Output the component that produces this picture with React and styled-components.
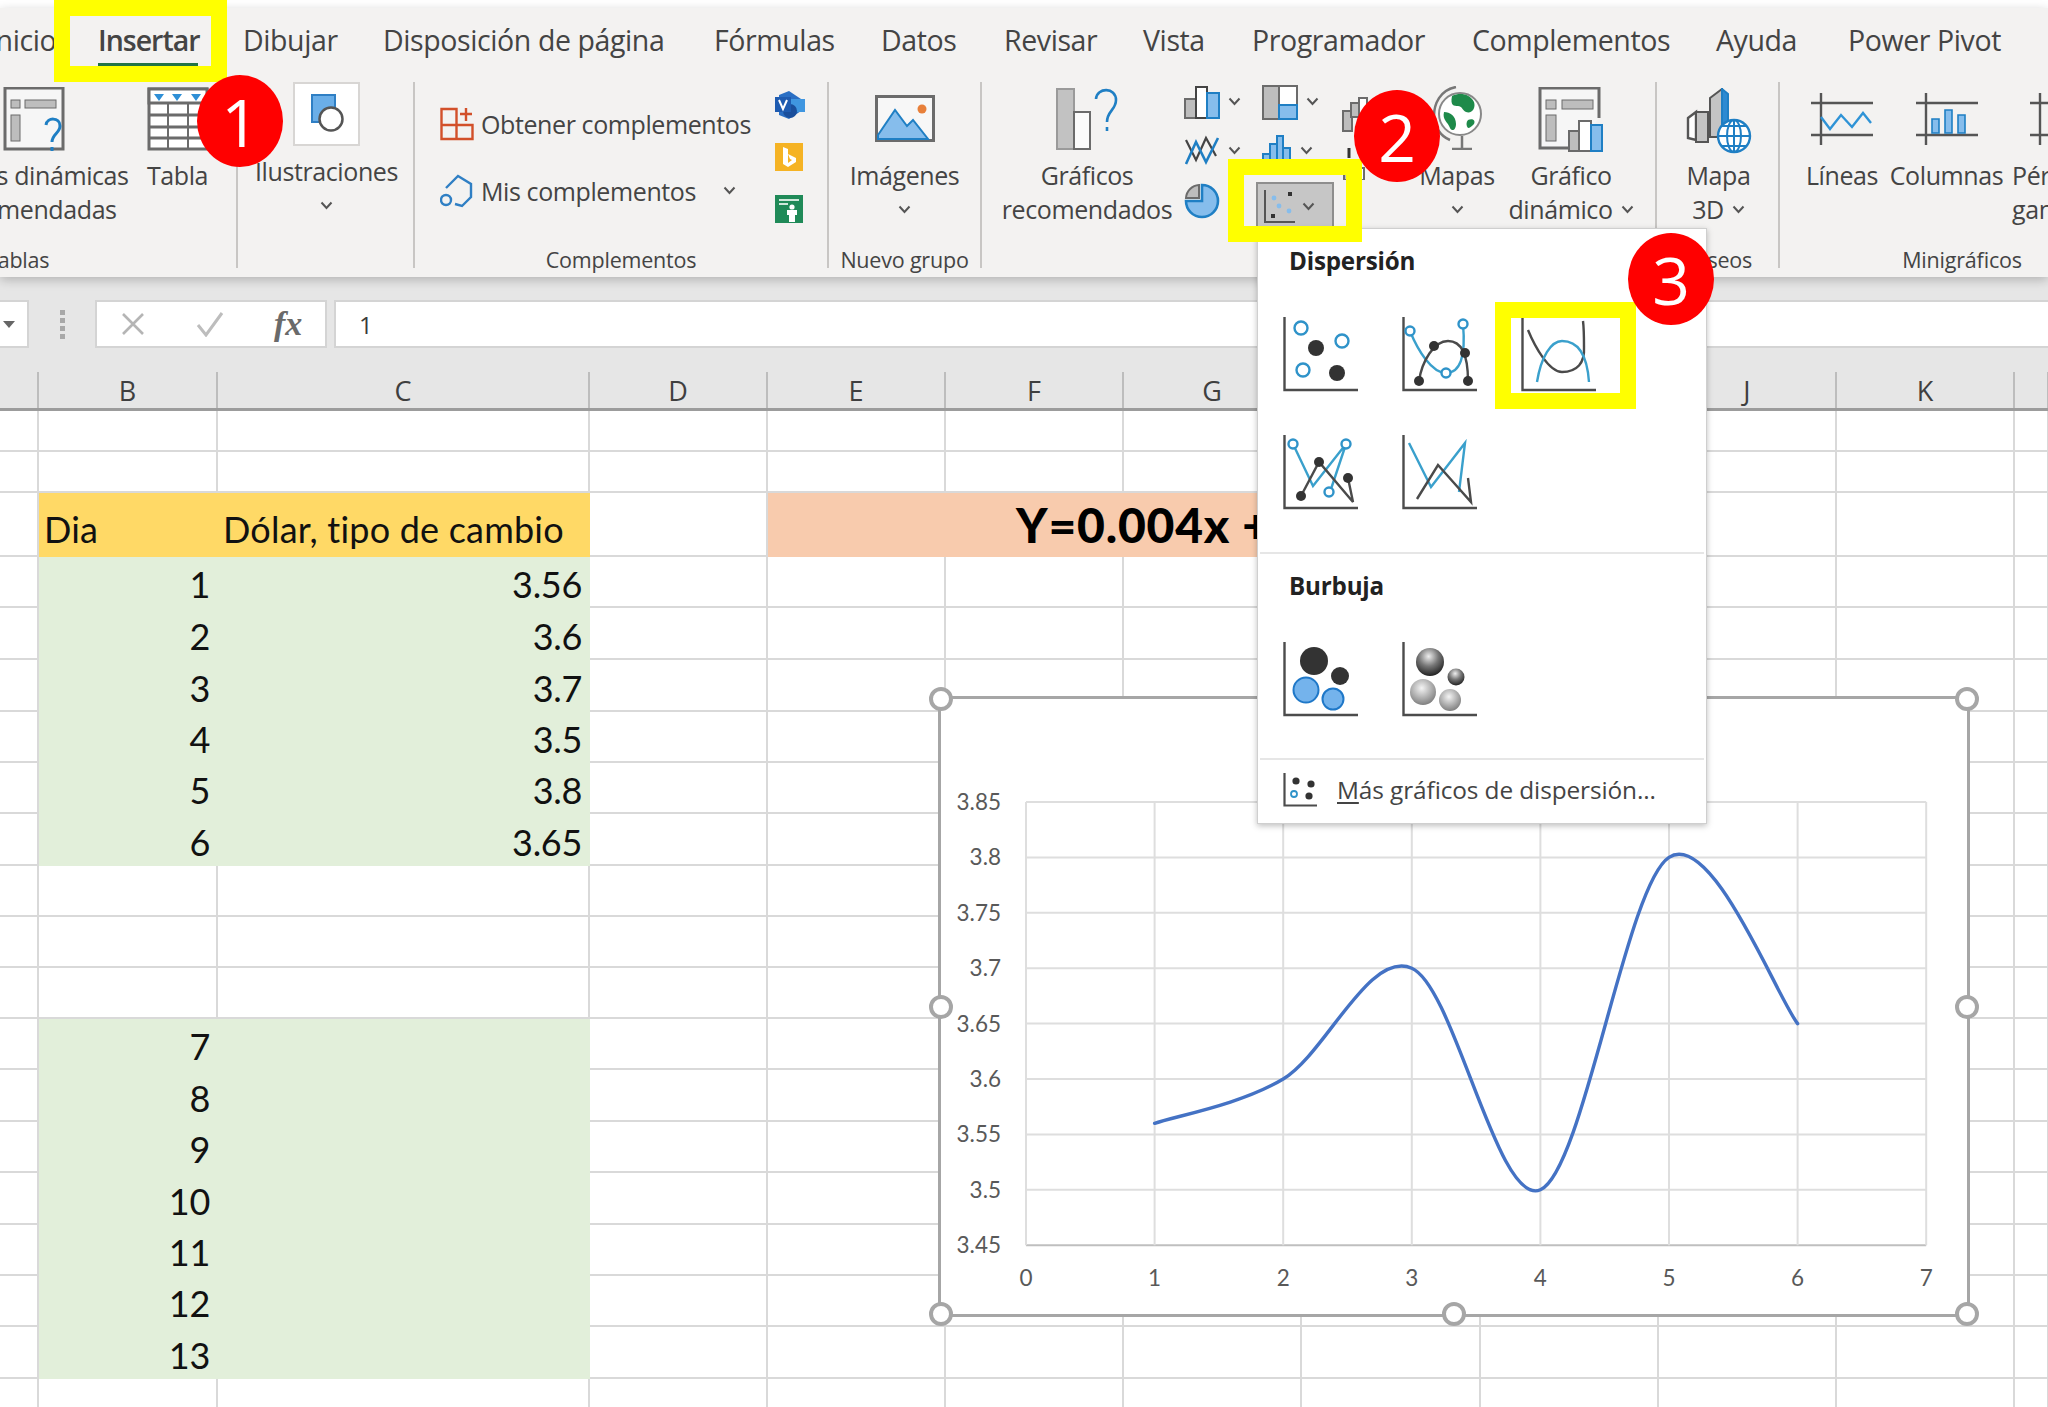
import React from 'react'
import styled, { createGlobalStyle } from 'styled-components'

const ui = '"Open Sans", "Noto Sans", sans-serif'
const cellFont = 'Lato, "Open Sans", sans-serif'
const ink = '#444444'
const gray = '#6b6b6b'
const blue = '#1f7fc4'
const grid = '#d9d9d9'

const Global = createGlobalStyle`
  html, body { margin: 0; padding: 0; background: #fff; }
  #root { width: 2048px; height: 1407px; overflow: hidden; }
`

const Page = styled.div`
  position: relative;
  width: 2048px;
  height: 1407px;
  overflow: hidden;
  background: #fff;
  padding-top: 8px;
  box-sizing: border-box;
  font-family: ${ui};
  color: ${ink};
`

/* ribbon */
const Ribbon = styled.header`
  position: relative;
  z-index: 2;
  height: 269px;
  background: #f3f2f1;
  box-shadow: 0 3px 10px rgba(0, 0, 0, 0.22);
  overflow: hidden;
`
const Tabs = styled.nav`
  display: flex;
  height: 74px;
  margin-left: -12px;
`
const Tab = styled.div`
  position: relative;
  flex: none;
  width: ${p => p.$w}px;
  height: 59px;
  font-size: 28.5px;
  letter-spacing: ${p => (p.$active ? -1 : -0.4)}px;
  line-height: 64px;
  white-space: nowrap;
  font-weight: ${p => (p.$active ? 600 : 400)};
  ${p => p.$active && `
    &::after {
      content: '';
      position: absolute;
      left: 0;
      width: 100px;
      top: 55px;
      height: 4px;
      background: #217346;
    }
  `}
`
const Groups = styled.div`
  display: flex;
  height: 186px;
`
const Group = styled.section`
  flex: none;
  display: flex;
  flex-direction: column;
  width: ${p => p.$w}px;
  border-right: ${p => (p.$last ? 'none' : '2px solid #c8c6c4')};
  box-sizing: border-box;
`
const GroupBody = styled.div`
  flex: 1;
  display: flex;
  min-height: 0;
`
const GroupLabel = styled.div`
  height: 30px;
  line-height: 44px;
  font-size: 21.5px;
  letter-spacing: -0.2px;
  white-space: nowrap;
  text-align: ${p => (p.$left === undefined ? 'center' : 'left')};
  margin-left: ${p => p.$left || 0}px;
`
const BigButton = styled.div`
  flex: none;
  display: flex;
  flex-direction: column;
  align-items: ${p => (p.$start ? 'flex-start' : 'center')};
  width: ${p => p.$w}px;
  margin-left: ${p => p.$ml || 0}px;
`
const Slot = styled.div`
  height: 76px;
  display: flex;
  justify-content: center;
  padding-left: ${p => p.$pad || 0}px;
`
const Line = styled.div`
  display: flex;
  align-items: center;
  justify-content: center;
  gap: 8px;
  height: 34px;
  font-size: 25px;
  letter-spacing: -0.4px;
  white-space: nowrap;
`
const IllusBox = styled.div`
  width: 67px;
  height: 64px;
  box-sizing: border-box;
  background: #fff;
  border: 2px solid #d8d6d4;
  display: flex;
  align-items: center;
  justify-content: center;
  margin-bottom: 8px;
`
const Addins = styled.div`
  flex: none;
  width: 335px;
  margin-left: 25px;
  padding-top: 25px;
  display: flex;
  flex-direction: column;
  gap: 34px;
`
const Addin = styled.div`
  display: flex;
  align-items: center;
  gap: 7px;
  height: 33px;
  font-size: 25px;
  letter-spacing: -0.4px;
  white-space: nowrap;
  & > span { margin-right: 20px; }
`
const SideIcons = styled.div`
  padding-top: 9px;
  display: flex;
  flex-direction: column;
  gap: 24px;
`
const MiniGrid = styled.div`
  flex: none;
  width: 236px;
  margin-left: 12px;
  padding-top: 3px;
  display: grid;
  grid-template-columns: 78px 80px 78px;
  grid-auto-rows: 49px;
`
const MiniCell = styled.div`
  display: flex;
  align-items: flex-start;
  gap: 8px;
  & > svg:last-child { margin-top: 12px; }
`
const ScatterBtn = styled.div`
  display: flex;
  align-items: center;
  box-sizing: border-box;
  width: 78px;
  height: 49px;
  margin-left: -6px;
  margin-top: -1px;
  gap: 6px;
  background: #c6c6c6;
  border: 2px solid #8e8e8e;
`

/* formula bar */
const FormulaBar = styled.div`
  display: flex;
  height: 93px;
  padding-top: 23px;
  box-sizing: border-box;
  background: #e6e6e6;
`
const NameBox = styled.div`
  width: 29px;
  height: 48px;
  box-sizing: border-box;
  background: #fff;
  border: 2px solid #d4d4d4;
  border-left: none;
  display: flex;
  align-items: center;
  justify-content: center;
  padding-right: 10px;
  &::after {
    content: '';
    border-left: 6px solid transparent;
    border-right: 6px solid transparent;
    border-top: 7px solid #666;
  }
`
const Grip = styled.div`
  width: 66px;
  height: 48px;
  display: flex;
  flex-direction: column;
  align-items: center;
  justify-content: center;
  gap: 3px;
  & i { width: 5px; height: 5px; background: #a8a8a8; }
`
const FormulaButtons = styled.div`
  width: 232px;
  height: 48px;
  box-sizing: border-box;
  background: #fff;
  border: 2px solid #d4d4d4;
  display: flex;
  align-items: center;
  gap: 50px;
  padding-left: 23px;
`
const Fx = styled.span`
  font: italic 700 34px "Liberation Serif", serif;
  color: #6a6a6a;
`
const FormulaInput = styled.div`
  flex: 1;
  height: 48px;
  margin-left: 7px;
  padding-left: 23px;
  box-sizing: border-box;
  background: #fff;
  border: 2px solid #d4d4d4;
  border-right: none;
  font-size: 24px;
  line-height: 46px;
  color: #3a3a3a;
`

/* sheet */
const colWidths = [39, 179, 372, 178, 178, 178, 178, 179, 178, 178, 178, 34]
const rowHeights = [41, 41, 64, 51, 52, 52, 51, 51, 52, 51, 51, 51, 51, 52, 51, 52, 51, 51, 52, 51]
const colTemplate = colWidths.map(w => `${w}px`).join(' ')

const HeaderRow = styled.div`
  display: grid;
  grid-template-columns: ${colTemplate};
  height: 41px;
  box-sizing: border-box;
  background: #e6e6e6;
  border-bottom: 3px solid #9c9c9c;
`
const HeaderCell = styled.div`
  border-right: 2px solid #bdbdbd;
  box-sizing: border-box;
  text-align: center;
  font-size: 27px;
  line-height: 38px;
  color: #3f3f3f;
  overflow: hidden;
  margin-top: 2px;
`
const Sheet = styled.div`
  display: grid;
  grid-template-columns: ${colTemplate};
  grid-template-rows: ${rowHeights.map(h => `${h}px`).join(' ')};
`
const Cell = styled.div`
  box-sizing: border-box;
  background: ${p => p.$bg || '#fff'};
  border-right: ${p => (p.$bg ? 'none' : `2px solid ${grid}`)};
  border-bottom: ${p => (p.$bg ? 'none' : `2px solid ${grid}`)};
  display: flex;
  align-items: flex-end;
  justify-content: ${p => (p.$right ? 'flex-end' : 'flex-start')};
  padding: 0 ${p => (p.$right ? 8 : 0)}px 0 ${p => (p.$right ? 0 : 8)}px;
  font: 400 36px/48px ${cellFont};
  letter-spacing: -0.3px;
  color: #111;
  white-space: nowrap;
`
const HeadCell = styled(Cell)`
  padding: 0 0 4px 5px;
  letter-spacing: 0.2px;
`
const Equation = styled(Cell)`
  grid-column: span 4;
  border: none;
  padding-left: 248px;
  align-items: center;
  font-size: 48px;
  font-weight: 900;
  letter-spacing: 0.8px;
  color: #000;
`

/* chart */
const ChartFrame = styled.div`
  position: absolute;
  z-index: 3;
  left: 938px;
  top: 696px;
  width: 1032px;
  height: 621px;
  background: #fff;
  box-sizing: border-box;
  border: 3px solid #a6a6a6;
`
const Handle = styled.span`
  position: absolute;
  left: ${p => p.$x}%;
  top: ${p => p.$y}%;
  width: 24px;
  height: 24px;
  margin: -12px;
  box-sizing: border-box;
  border-radius: 50%;
  background: #fff;
  border: 4px solid #a6a6a6;
`

/* dropdown */
const Popup = styled.aside`
  position: absolute;
  z-index: 4;
  left: 1257px;
  top: 228px;
  width: 450px;
  height: 596px;
  box-sizing: border-box;
  background: #fff;
  border: 1px solid #cfcfcf;
  box-shadow: 0 2px 6px rgba(0, 0, 0, 0.25);
  display: flex;
  flex-direction: column;
`
const PopupTitle = styled.div`
  padding: ${p => p.$top}px 0 0 31px;
  font-size: 24.2px;
  font-weight: 700;
  line-height: 30px;
  color: #222;
  letter-spacing: -0.2px;
`
const IconGrid = styled.div`
  display: grid;
  grid-template-columns: 119px 119px 75px;
  grid-auto-rows: 75px;
  row-gap: 43px;
  padding: ${p => p.$top}px 0 0 25px;
`
const Divider = styled.hr`
  margin: ${p => p.$top}px 2px 0;
  border: none;
  border-top: 2px solid #e6e6e6;
`
const MoreRow = styled.div`
  display: flex;
  align-items: center;
  gap: 20px;
  padding: 12px 0 0 25px;
  font-size: 24.4px;
  line-height: 36px;
  letter-spacing: -0.1px;
  color: #444;
  white-space: nowrap;
  & u { text-underline-offset: 3px; }
`

/* annotations */
const Frame = styled.div`
  position: absolute;
  z-index: 5;
  left: ${p => p.$x}px;
  top: ${p => p.$y}px;
  width: ${p => p.$w}px;
  height: ${p => p.$h}px;
  box-sizing: border-box;
  border: 16px solid #ffff00;
`
const Badge = styled.div`
  position: absolute;
  z-index: 6;
  left: ${p => p.$x - 43}px;
  top: ${p => p.$y - 46}px;
  width: 86px;
  height: 92px;
  border-radius: 50%;
  background: #ff0000;
  color: #fff;
  display: flex;
  align-items: center;
  justify-content: center;
  font: 400 66px "Open Sans", sans-serif;
`

const Chevron = () => (
  <svg width="13" height="9" viewBox="0 0 13 9"><path d="M1.5 1.5 6.5 7l5-5.5" fill="none" stroke="#555" strokeWidth="2" /></svg>
)

const PivotIcon = () => (
  <svg width="70" height="72" viewBox="0 0 70 72" style={{ marginTop: 5, marginLeft: 10 }}>
    <rect x="3" y="1" width="58" height="61" fill="#f6f6f6" stroke={gray} strokeWidth="3" />
    <rect x="9" y="13" width="9" height="8" fill="#bdbdbd" stroke={gray} />
    <rect x="23" y="13" width="31" height="8" fill="#bdbdbd" stroke={gray} />
    <rect x="9" y="28" width="9" height="26" fill="#bdbdbd" stroke={gray} />
    <path d="M44 38c1-8 14-8 14 1 0 7-8 8-8 16M50 60v4" fill="none" stroke={blue} strokeWidth="3" />
  </svg>
)
const TableIcon = () => (
  <svg width="62" height="64" viewBox="0 0 62 64" style={{ marginTop: 5 }}>
    <rect x="2" y="2" width="58" height="60" fill="#fff" stroke={gray} strokeWidth="3" />
    <rect x="2" y="2" width="58" height="14" fill="#fff" stroke={gray} strokeWidth="3" />
    <path d="M7 7h10l-5 7zM25 7h10l-5 7zM44 7h10l-5 7z" fill="#2f8fd6" />
    <path d="M2 28h58M2 40h58M2 51h58" stroke={gray} strokeWidth="3" />
    <path d="M21 16v46M41 16v46" stroke={gray} strokeWidth="2" />
  </svg>
)
const IllusIcon = () => (
  <svg width="40" height="42" viewBox="0 0 40 42">
    <rect x="5" y="2" width="23" height="27" fill="#6aaee8" stroke="#2f7fc4" strokeWidth="2" />
    <circle cx="24" cy="26" r="11.5" fill="#fff" stroke="#555" strokeWidth="2.5" />
  </svg>
)
const StoreIcon = () => (
  <svg width="34" height="34" viewBox="0 0 34 34">
    <path d="M1.5 2h15v30h-15zM1.5 18h31v14h-16" fill="none" stroke="#d2502a" strokeWidth="2.4" />
    <path d="M26 1v13M20 7h12" stroke="#d2502a" strokeWidth="2.4" />
  </svg>
)
const MyAddinIcon = () => (
  <svg width="34" height="34" viewBox="0 0 34 34" fill="none" stroke="#2f7fc4" strokeWidth="2.4">
    <circle cx="6" cy="26" r="5" />
    <path d="M6 14 18 2l13 8v13l-9 9-7-2" />
  </svg>
)
const VisioIcon = () => (
  <svg width="30" height="28" viewBox="0 0 30 28">
    <path d="M14 0 26 8v12l-12 8-10-4V4z" fill="#2a6fc4" />
    <rect x="15" y="8" width="15" height="13" fill="#3f96e0" />
    <circle cx="15" cy="20" r="7" fill="#1a4f9c" />
    <rect x="0" y="6" width="16" height="15" fill="#1e5bb0" />
    <path d="m4 9 4 9 4-9" fill="none" stroke="#fff" strokeWidth="2" />
  </svg>
)
const BingIcon = () => (
  <svg width="28" height="28" viewBox="0 0 28 28">
    <rect width="28" height="28" fill="#f5b324" />
    <path d="M8 4v17l5 3 8-5v-4l-8-4 2 5 2 1-4 3V6z" fill="#fff" />
  </svg>
)
const PeopleIcon = () => (
  <svg width="28" height="28" viewBox="0 0 28 28">
    <rect width="28" height="28" fill="#1f8a58" />
    <path d="M4 5h20M4 9h9" stroke="#cfe8da" strokeWidth="2" />
    <circle cx="17" cy="12" r="2.6" fill="#fff" />
    <path d="M12 15h10v5h-2v7h-6v-7h-2z" fill="#fff" />
  </svg>
)
const PictureIcon = () => (
  <svg width="60" height="47" viewBox="0 0 60 47" style={{ marginTop: 13 }}>
    <rect x="1.5" y="1.5" width="57" height="44" fill="#f7f7f7" stroke={gray} strokeWidth="3" />
    <path d="M3 40 20 15l12 16 6-6 15 19H3z" fill="#86bdec" stroke={blue} strokeWidth="2" />
    <circle cx="47" cy="14" r="4.5" fill="#e8803a" />
  </svg>
)
const RecommendIcon = () => (
  <svg width="62" height="64" viewBox="0 0 62 64" style={{ marginTop: 5 }}>
    <rect x="1" y="2" width="17" height="60" fill="#c2c2c2" stroke="#9a9a9a" strokeWidth="2" />
    <rect x="18" y="25" width="16" height="37" fill="#fbfbfb" stroke={gray} strokeWidth="2" />
    <path d="M40 12c1-12 20-12 20 1 0 10-9 11-9 22M51 40v4" fill="none" stroke={blue} strokeWidth="2.6" />
  </svg>
)
const ColumnMini = () => (
  <svg width="36" height="35" viewBox="0 0 36 35">
    <rect x="1" y="14" width="12" height="19" fill="#bdbdbd" stroke={gray} strokeWidth="2" />
    <rect x="12" y="2" width="11" height="31" fill="#fff" stroke="#444" strokeWidth="2" />
    <rect x="23" y="8" width="12" height="25" fill="#86bdec" stroke={blue} strokeWidth="2" />
  </svg>
)
const TreeMini = () => (
  <svg width="36" height="35" viewBox="0 0 36 35">
    <rect x="1" y="1" width="16" height="33" fill="#bdbdbd" stroke={gray} strokeWidth="2" />
    <rect x="17" y="1" width="18" height="19" fill="#fff" stroke={gray} strokeWidth="2" />
    <rect x="17" y="20" width="18" height="14" fill="#86bdec" stroke={blue} strokeWidth="2" />
  </svg>
)
const WaterfallMini = () => (
  <svg width="26" height="35" viewBox="0 0 26 35">
    <rect x="1" y="14" width="9" height="20" fill="#bdbdbd" stroke={gray} strokeWidth="2" />
    <rect x="9" y="6" width="8" height="14" fill="#bdbdbd" stroke={gray} strokeWidth="2" />
    <rect x="17" y="1" width="8" height="20" fill="#fff" stroke={gray} strokeWidth="2" />
  </svg>
)
const LineMini = () => (
  <svg width="36" height="34" viewBox="0 0 36 34">
    <path d="M2 6 12 26 22 4l10 18" fill="none" stroke="#444" strokeWidth="2.2" />
    <path d="M2 30 12 8l10 20L34 4" fill="none" stroke={blue} strokeWidth="2.6" />
  </svg>
)
const HistMini = () => (
  <svg width="30" height="34" viewBox="0 0 30 34">
    <rect x="1" y="20" width="7" height="14" fill="#86bdec" stroke={blue} strokeWidth="2" />
    <rect x="8" y="10" width="7" height="24" fill="#86bdec" stroke={blue} strokeWidth="2" />
    <rect x="15" y="2" width="6" height="32" fill="#86bdec" stroke={blue} strokeWidth="2" />
    <rect x="21" y="14" width="7" height="20" fill="#86bdec" stroke={blue} strokeWidth="2" />
  </svg>
)
const StockMini = () => (
  <svg width="26" height="34" viewBox="0 0 26 34">
    <rect x="2" y="14" width="10" height="20" fill="#bdbdbd" stroke={gray} strokeWidth="2" />
    <rect x="12" y="22" width="10" height="12" fill="#fff" stroke={gray} strokeWidth="2" />
    <path d="M7 2v10" stroke="#333" strokeWidth="3" />
  </svg>
)
const PieMini = () => (
  <svg width="36" height="36" viewBox="0 0 36 36">
    <path d="M18 18V2a16 16 0 1 1-16 16z" fill="#86bdec" stroke={blue} strokeWidth="2.6" />
    <path d="M15 15V2A14 14 0 0 0 2 15z" fill="#bdbdbd" stroke={gray} strokeWidth="2" />
  </svg>
)
const ScatterMini = () => (
  <svg width="38" height="42" viewBox="0 0 38 42">
    <path d="M7 4v32h30" fill="none" stroke="#555" strokeWidth="2" />
    <rect x="30" y="6" width="4" height="4" fill="#333" />
    <rect x="13" y="28" width="4" height="4" fill="#333" />
    <circle cx="16" cy="12" r="2.4" fill="#86bdec" />
    <circle cx="21" cy="20" r="2.4" fill="#86bdec" />
    <circle cx="31" cy="25" r="2.4" fill="#86bdec" />
  </svg>
)
const GlobeIcon = () => (
  <svg width="50" height="64" viewBox="0 0 50 64" style={{ marginTop: 4 }}>
    <path d="M24 1C8 4 2 18 2 30c0 10 6 20 16 24" fill="none" stroke="#777" strokeWidth="2.5" />
    <circle cx="28" cy="28" r="21" fill="#fff" stroke="#888" strokeWidth="2" />
    <path d="M20 10c8-4 18-2 22 6 2 6-2 12-8 10-4-2-4-6-8-6s-8 0-6-10zM12 26c6 0 12 4 12 12 0 6-4 8-6 4-2-6-8-8-6-16zM36 34c4-2 8 0 6 4-2 2-4 4-6 4-2-2-2-6 0-8z" fill="#1e8a4a" />
    <path d="M20 63h20M30 50v13" stroke="#777" strokeWidth="2.5" />
  </svg>
)
const PivotChartIcon = () => (
  <svg width="66" height="66" viewBox="0 0 66 66" style={{ marginTop: 5 }}>
    <path d="M40 61H2V1h59v30" fill="#f6f6f6" stroke={gray} strokeWidth="3" />
    <rect x="8" y="13" width="10" height="9" fill="#bdbdbd" stroke={gray} />
    <rect x="24" y="13" width="31" height="9" fill="#bdbdbd" stroke={gray} />
    <rect x="8" y="28" width="10" height="26" fill="#bdbdbd" stroke={gray} />
    <rect x="31" y="44" width="10" height="20" fill="#bdbdbd" stroke={gray} strokeWidth="2" />
    <rect x="41" y="34" width="12" height="30" fill="#fff" stroke={gray} strokeWidth="2" />
    <rect x="53" y="38" width="11" height="26" fill="#86bdec" stroke={blue} strokeWidth="2" />
  </svg>
)
const Map3dIcon = () => (
  <svg width="66" height="66" viewBox="0 0 66 66" style={{ marginTop: 6 }}>
    <path d="M2 30 10 24v28l-8-2z" fill="#fff" stroke="#555" strokeWidth="2.4" />
    <path d="M10 24h12v30H10z" fill="#c4c4c4" stroke="#555" strokeWidth="2" />
    <path d="M24 10 36 1v48H24z" fill="#c4c4c4" stroke="#555" strokeWidth="2" />
    <path d="M36 1l6 5v30H36z" fill="#2d8ad2" stroke={blue} strokeWidth="2" />
    <circle cx="48" cy="48" r="16" fill="#fff" stroke={blue} strokeWidth="2.4" />
    <path d="M32 48h32M48 32v32M36 38h24M36 58h24" stroke={blue} strokeWidth="2" fill="none" />
    <ellipse cx="48" cy="48" rx="7" ry="16" fill="none" stroke={blue} strokeWidth="2" />
  </svg>
)
const SparkLine = () => (
  <svg width="62" height="52" viewBox="0 0 62 52" style={{ marginTop: 11 }}>
    <path d="M0 10h62M0 42h62M10 0v52" stroke="#555" strokeWidth="2.4" />
    <path d="M10 24l9 12 11-14 11 12 11-14 8 10" fill="none" stroke="#2f93d6" strokeWidth="2.4" />
  </svg>
)
const SparkColumn = () => (
  <svg width="62" height="52" viewBox="0 0 62 52" style={{ marginTop: 11 }}>
    <path d="M0 10h62M0 42h62M10 0v52" stroke="#555" strokeWidth="2.4" />
    <path d="M16 26h7v14h-7zM29 17h7v23h-7zM42 22h7v18h-7z" fill="#86bdec" stroke={blue} strokeWidth="1.6" />
  </svg>
)
const SparkWinLoss = () => (
  <svg width="62" height="52" viewBox="0 0 62 52" style={{ marginTop: 11 }}>
    <path d="M0 10h62M0 42h62M10 0v52" stroke="#555" strokeWidth="2.4" />
  </svg>
)

const Axes = ({ size = 75 }) => (
  <path d={`M1.5 0v${size - 2}H${size}`} fill="none" stroke="#4c4c4c" strokeWidth="2.4" />
)
const Plot = ({ children, size = 75 }) => (
  <svg width={size} height={size} viewBox={`0 0 ${size} ${size}`}>
    <Axes size={size} />
    {children}
  </svg>
)
const Open = ({ x, y, r = 6 }) => <circle cx={x} cy={y} r={r} fill="#fff" stroke="#2f93c9" strokeWidth="2.4" />
const Dot = ({ x, y, r = 7 }) => <circle cx={x} cy={y} r={r} fill="#333" />
const BlueLine = ({ d }) => <path d={d} fill="none" stroke="#3aa0cc" strokeWidth="2.4" />
const DarkLine = ({ d }) => <path d={d} fill="none" stroke="#4a4a4a" strokeWidth="2.4" />

const ScatterDots = () => (
  <Plot>
    <Open x={18} y={11} r={6.5} />
    <Open x={59} y={24} r={6.5} />
    <Open x={20} y={53} r={6.5} />
    <Dot x={33} y={31} r={8} />
    <Dot x={54} y={56} r={8} />
  </Plot>
)
const ScatterSmoothDots = () => (
  <Plot>
    <BlueLine d="M8 14C16 34 30 56 44 56S64 40 61 7" />
    <DarkLine d="M17 64C20 44 32 24 46 24S66 40 66 64" />
    <Open x={8} y={14} r={4.5} />
    <Open x={61} y={7} r={4.5} />
    <Open x={44} y={56} r={4.5} />
    <Dot x={32} y={29} r={5} />
    <Dot x={63} y={36} r={5} />
    <Dot x={17} y={64} r={5} />
    <Dot x={66} y={64} r={5} />
  </Plot>
)
const ScatterSmooth = () => (
  <Plot>
    <DarkLine d="M7 13C14 30 28 55 41 55C56 55 64 46 63 30C63 20 63 12 62 4" />
    <BlueLine d="M16 65C20 40 30 24 41 24C56 24 66 36 68 65" />
  </Plot>
)
const ScatterStraightDots = () => (
  <Plot>
    <BlueLine d="M10 9 30 51 63 9 47 57" />
    <DarkLine d="M18 61 36 27 70 67 65 43" />
    <Open x={10} y={9} r={4.5} />
    <Open x={63} y={9} r={4.5} />
    <Open x={46} y={57} r={4.5} />
    <Dot x={18} y={61} r={5} />
    <Dot x={36} y={27} r={5} />
    <Dot x={65} y={43} r={5} />
  </Plot>
)
const ScatterStraight = () => (
  <Plot>
    <BlueLine d="M7 8 29 52 63 8 57 57" />
    <DarkLine d="M15 64 36 30 69 67 66 43" />
  </Plot>
)
const Bubbles = () => (
  <Plot>
    <circle cx="31" cy="19" r="14" fill="#333" />
    <circle cx="57" cy="34" r="9" fill="#333" />
    <circle cx="23" cy="48" r="12.5" fill="#74b3ec" stroke="#1f78c8" strokeWidth="2" />
    <circle cx="50" cy="57" r="10.5" fill="#74b3ec" stroke="#1f78c8" strokeWidth="2" />
  </Plot>
)
const Bubbles3d = () => (
  <Plot>
    <defs>
      <radialGradient id="sphereDark" cx="45%" cy="30%" r="70%">
        <stop offset="0" stopColor="#eee" />
        <stop offset="0.5" stopColor="#777" />
        <stop offset="1" stopColor="#222" />
      </radialGradient>
      <radialGradient id="sphereLight" cx="45%" cy="35%" r="70%">
        <stop offset="0" stopColor="#f4f4f4" />
        <stop offset="1" stopColor="#777" />
      </radialGradient>
    </defs>
    <circle cx="28" cy="20" r="14" fill="url(#sphereDark)" />
    <circle cx="54" cy="35" r="8.5" fill="url(#sphereDark)" />
    <circle cx="21" cy="50" r="13" fill="url(#sphereLight)" />
    <circle cx="48" cy="58" r="11" fill="url(#sphereLight)" />
  </Plot>
)
const MoreIcon = () => (
  <svg width="34" height="34" viewBox="0 0 34 34">
    <path d="M1.5 0v32.5H34" fill="none" stroke="#4c4c4c" strokeWidth="2.2" />
    <circle cx="13" cy="8" r="3.6" fill="#333" />
    <circle cx="28" cy="11" r="3.6" fill="#333" />
    <circle cx="11" cy="21" r="3" fill="#fff" stroke="#2f93c9" strokeWidth="1.8" />
    <circle cx="26" cy="23" r="3.6" fill="#333" />
  </svg>
)

const CloseMark = () => (
  <svg width="26" height="26" viewBox="0 0 26 26"><path d="M3 3l20 20M23 3 3 23" stroke="#b5b5b5" strokeWidth="2.6" /></svg>
)
const CheckMark = () => (
  <svg width="28" height="26" viewBox="0 0 28 26"><path d="M2 14l8 10L26 2" fill="none" stroke="#bdbdbd" strokeWidth="3" /></svg>
)

/* chart data, in the frame's own pixels */
const points = [[1, 3.56], [2, 3.6], [3, 3.7], [4, 3.5], [5, 3.8], [6, 3.65]]
const px = x => 85 + x * 128.6
const py = y => 103 + (3.85 - y) * 1108
const smoothPath = pts => {
  const p = pts.map(([x, y]) => [px(x), py(y)])
  let d = `M${p[0][0]} ${p[0][1]}`
  for (let i = 0; i < p.length - 1; i++) {
    const a = p[i - 1] || p[i]
    const b = p[i]
    const c = p[i + 1]
    const e = p[i + 2] || c
    d += `C${b[0] + (c[0] - a[0]) / 6} ${b[1] + (c[1] - a[1]) / 6} ${c[0] - (e[0] - b[0]) / 6} ${c[1] - (e[1] - b[1]) / 6} ${c[0]} ${c[1]}`
  }
  return d
}

const Chart = () => {
  const ys = ['3.85', '3.8', '3.75', '3.7', '3.65', '3.6', '3.55', '3.5', '3.45']
  const xs = [0, 1, 2, 3, 4, 5, 6, 7]
  const label = { fontFamily: cellFont, fontSize: 22.5, fill: '#595959' }
  return (
    <svg width="1026" height="615" viewBox="0 0 1026 615" style={{ display: 'block' }}>
      {ys.map(v => (
        <g key={v}>
          <line x1={px(0)} x2={px(7)} y1={py(+v)} y2={py(+v)} stroke={v === '3.45' ? '#bfbfbf' : '#dedede'} strokeWidth="2" />
          <text x="60" y={py(+v) + 8} textAnchor="end" {...label}>{v}</text>
        </g>
      ))}
      {xs.map(v => (
        <g key={v}>
          <line x1={px(v)} x2={px(v)} y1={py(3.85)} y2={py(3.45)} stroke="#dedede" strokeWidth="2" />
          <text x={px(v)} y="587" textAnchor="middle" {...label}>{v}</text>
        </g>
      ))}
      <path d={smoothPath(points)} fill="none" stroke="#4472c4" strokeWidth="3.4" strokeLinecap="round" />
    </svg>
  )
}

const tabs = [
  ['Inicio', 110], ['Insertar', 145, true], ['Dibujar', 140], ['Disposición de página', 331], ['Fórmulas', 167],
  ['Datos', 123], ['Revisar', 139], ['Vista', 109], ['Programador', 220], ['Complementos', 244], ['Ayuda', 132], ['Power Pivot', 160]
]

const columns = ['', 'B', 'C', 'D', 'E', 'F', 'G', 'H', 'I', 'J', 'K', '']
const firstBlock = ['3.56', '3.6', '3.7', '3.5', '3.8', '3.65']

const renderSheet = () => {
  const cells = []
  rowHeights.forEach((_, r) => {
    colWidths.forEach((__, c) => {
      const key = `${r}-${c}`
      if (r === 2 && c === 4) {
        cells.push(<Equation key={key} $bg="#f8cbad">Y=0.004x +</Equation>)
        return
      }
      if (r === 2 && c > 4 && c < 8) return
      if (r === 2 && (c === 1 || c === 2)) {
        cells.push(<HeadCell key={key} $bg="#ffd966">{c === 1 ? 'Dia' : 'Dólar, tipo de cambio'}</HeadCell>)
        return
      }
      const first = r >= 3 && r <= 8
      const second = r >= 12 && r <= 18
      if ((first || second) && (c === 1 || c === 2)) {
        let text = ''
        if (c === 1) text = first ? r - 2 : r - 5
        if (c === 2 && first) text = firstBlock[r - 3]
        cells.push(<Cell key={key} $bg="#e2efda" $right>{text}</Cell>)
        return
      }
      cells.push(<Cell key={key} />)
    })
  })
  return cells
}

const App = () => (
  <Page>
    <Global />
    <Ribbon>
      <Tabs>
        {tabs.map(([name, w, active]) => <Tab key={name} $w={w} $active={active}>{name}</Tab>)}
      </Tabs>
      <Groups>
        <Group $w={238}>
          <GroupBody>
            <BigButton $w={192} $ml={-64}>
              <Slot><PivotIcon /></Slot>
              <Line>Tablas dinámicas</Line>
              <Line>recomendadas</Line>
            </BigButton>
            <BigButton $w={57} $ml={21}>
              <Slot><TableIcon /></Slot>
              <Line>Tabla</Line>
            </BigButton>
          </GroupBody>
          <GroupLabel $left={-14}>Tablas</GroupLabel>
        </Group>
        <Group $w={177}>
          <GroupBody>
            <BigButton $w={141} $ml={18}>
              <IllusBox><IllusIcon /></IllusBox>
              <Line>Ilustraciones</Line>
              <Line><Chevron /></Line>
            </BigButton>
          </GroupBody>
          <GroupLabel />
        </Group>
        <Group $w={414}>
          <GroupBody>
            <Addins>
              <Addin><StoreIcon /><span>Obtener complementos</span></Addin>
              <Addin><MyAddinIcon /><span>Mis complementos</span><Chevron /></Addin>
            </Addins>
            <SideIcons>
              <VisioIcon />
              <BingIcon />
              <PeopleIcon />
            </SideIcons>
          </GroupBody>
          <GroupLabel>Complementos</GroupLabel>
        </Group>
        <Group $w={153}>
          <GroupBody>
            <BigButton $w={151}>
              <Slot><PictureIcon /></Slot>
              <Line>Imágenes</Line>
              <Line><Chevron /></Line>
            </BigButton>
          </GroupBody>
          <GroupLabel>Nuevo grupo</GroupLabel>
        </Group>
        <Group $w={675}>
          <GroupBody>
            <BigButton $w={170} $ml={20}>
              <Slot><RecommendIcon /></Slot>
              <Line>Gráficos</Line>
              <Line>recomendados</Line>
            </BigButton>
            <MiniGrid>
              <MiniCell><ColumnMini /><Chevron /></MiniCell>
              <MiniCell><TreeMini /><Chevron /></MiniCell>
              <MiniCell><WaterfallMini /></MiniCell>
              <MiniCell><LineMini /><Chevron /></MiniCell>
              <MiniCell><HistMini /><Chevron /></MiniCell>
              <MiniCell><StockMini /></MiniCell>
              <MiniCell><PieMini /><Chevron /></MiniCell>
              <ScatterBtn><ScatterMini /><Chevron /></ScatterBtn>
            </MiniGrid>
            <BigButton $w={76} $ml={-1}>
              <Slot><GlobeIcon /></Slot>
              <Line>Mapas</Line>
              <Line><Chevron /></Line>
            </BigButton>
            <BigButton $w={130} $ml={11}>
              <Slot><PivotChartIcon /></Slot>
              <Line>Gráfico</Line>
              <Line>dinámico <Chevron /></Line>
            </BigButton>
          </GroupBody>
          <GroupLabel />
        </Group>
        <Group $w={123}>
          <GroupBody>
            <BigButton $w={123}>
              <Slot><Map3dIcon /></Slot>
              <Line>Mapa</Line>
              <Line>3D <Chevron /></Line>
            </BigButton>
          </GroupBody>
          <GroupLabel>Paseos</GroupLabel>
        </Group>
        <Group $w={364} $last>
          <GroupBody>
            <BigButton $w={68} $ml={28}>
              <Slot><SparkLine /></Slot>
              <Line>Líneas</Line>
            </BigButton>
            <BigButton $w={111} $ml={15}>
              <Slot><SparkColumn /></Slot>
              <Line>Columnas</Line>
            </BigButton>
            <BigButton $w={62} $ml={10} $start>
              <Slot $pad={18}><SparkWinLoss /></Slot>
              <Line>Pérdidas</Line>
              <Line>ganancias</Line>
            </BigButton>
          </GroupBody>
          <GroupLabel>Minigráficos</GroupLabel>
        </Group>
      </Groups>
    </Ribbon>

    <FormulaBar>
      <NameBox />
      <Grip><i /><i /><i /><i /></Grip>
      <FormulaButtons><CloseMark /><CheckMark /><Fx>fx</Fx></FormulaButtons>
      <FormulaInput>1</FormulaInput>
    </FormulaBar>

    <HeaderRow>
      {columns.map((c, i) => <HeaderCell key={i}>{c}</HeaderCell>)}
    </HeaderRow>
    <Sheet>{renderSheet()}</Sheet>

    <ChartFrame>
      <Chart />
      <Handle $x={0} $y={0} />
      <Handle $x={100} $y={0} />
      <Handle $x={0} $y={50} />
      <Handle $x={100} $y={50} />
      <Handle $x={0} $y={100} />
      <Handle $x={50} $y={100} />
      <Handle $x={100} $y={100} />
    </ChartFrame>

    <Popup>
      <PopupTitle $top={17}>Dispersión</PopupTitle>
      <IconGrid $top={41}>
        <ScatterDots />
        <ScatterSmoothDots />
        <ScatterSmooth />
        <ScatterStraightDots />
        <ScatterStraight />
      </IconGrid>
      <Divider $top={42} />
      <PopupTitle $top={17}>Burbuja</PopupTitle>
      <IconGrid $top={41}>
        <Bubbles />
        <Bubbles3d />
      </IconGrid>
      <Divider $top={41} />
      <MoreRow><MoreIcon /><span><u>M</u>ás gráficos de dispersión...</span></MoreRow>
    </Popup>

    <Frame $x={54} $y={0} $w={173} $h={82} />
    <Frame $x={1228} $y={159} $w={134} $h={83} />
    <Frame $x={1495} $y={302} $w={141} $h={107} />
    <Badge $x={240} $y={121}>1</Badge>
    <Badge $x={1397} $y={136}>2</Badge>
    <Badge $x={1671} $y={279}>3</Badge>
  </Page>
)

export default App
